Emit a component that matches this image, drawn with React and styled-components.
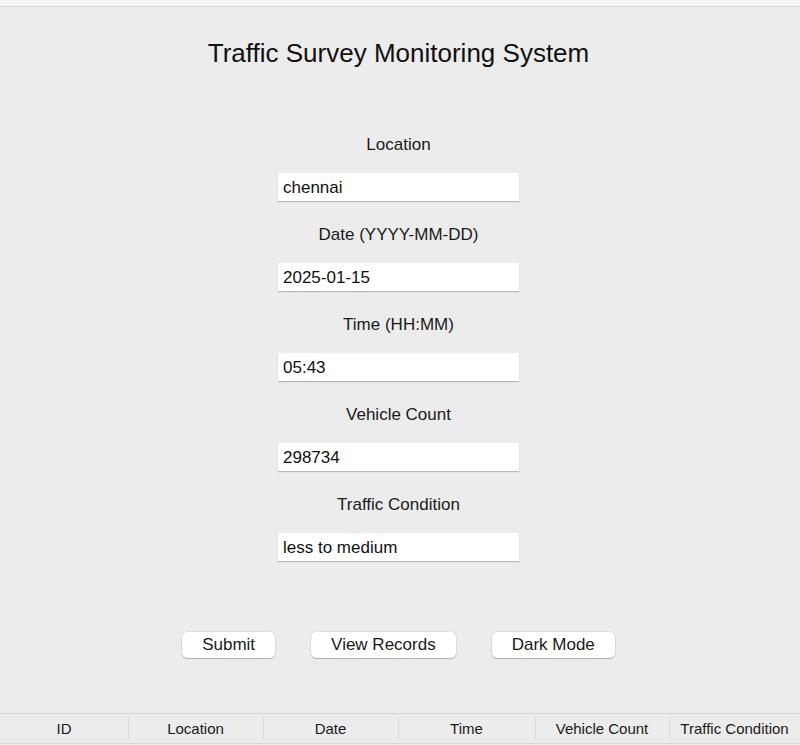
import React from 'react'
import styled, { createGlobalStyle } from 'styled-components'

const GlobalStyle = createGlobalStyle`
    html, body {
        margin: 0;
        padding: 0;
        background: #ececec;
    }
    body {
        font-family: "Liberation Sans", Arial, sans-serif;
        color: #1a1a1a;
    }
`

const fields = [
    { label: 'Location', value: 'chennai' },
    { label: 'Date (YYYY-MM-DD)', value: '2025-01-15' },
    { label: 'Time (HH:MM)', value: '05:43' },
    { label: 'Vehicle Count', value: '298734' },
    { label: 'Traffic Condition', value: 'less to medium' },
]

const columns = ['ID', 'Location', 'Date', 'Time', 'Vehicle Count', 'Traffic Condition']

function App() {
    return (
        <Window>
            <GlobalStyle />
            <TitleBar />
            <Title>Traffic Survey Monitoring System</Title>
            <Form>
                {fields.map((f) => (
                    <Field key={f.label}>
                        <Label>{f.label}</Label>
                        <Input defaultValue={f.value} />
                    </Field>
                ))}
            </Form>
            <Actions>
                <Button>Submit</Button>
                <Button>View Records</Button>
                <Button>Dark Mode</Button>
            </Actions>
            <TableHead>
                {columns.map((c, i) => (
                    <HeadCell key={c} $first={i === 0}>{c}</HeadCell>
                ))}
            </TableHead>
        </Window>
    )
}

export default App

const Window = styled.div`
    box-sizing: border-box;
    display: flex;
    flex-direction: column;
    align-items: center;
    width: 800px;
    height: 745px;
    padding-right: 3px;
    overflow: hidden;
`

const TitleBar = styled.div`
    align-self: stretch;
    margin-right: -3px;
    height: 6px;
    background: #f5f5f5;
    border-bottom: 1px solid #d8d8d8;
`

const Title = styled.h1`
    margin: 31px 0 0;
    font-weight: 400;
    font-size: 26px;
    line-height: 30px;
    color: #111;
`

const Form = styled.div`
    display: flex;
    flex-direction: column;
    margin-top: 66px;
    width: 241px;
`

const Field = styled.div`
    display: flex;
    flex-direction: column;
    align-items: center;
    height: 90px;
`

const Label = styled.div`
    padding-top: 1px;
    font-size: 17px;
    line-height: 20px;
    color: #1a1a1a;
`

const Input = styled.input`
    box-sizing: border-box;
    margin-top: 18px;
    width: 241px;
    height: 28px;
    padding: 1px 5px 0;
    border: none;
    background: #fff;
    box-shadow: 0 1px 1px rgba(0, 0, 0, 0.22);
    font-family: inherit;
    font-size: 17px;
    color: #111;
    outline: none;
`

const Actions = styled.div`
    display: flex;
    gap: 36px;
    margin-top: 48px;
`

const Button = styled.button`
    height: 26px;
    padding: 0 20px;
    border: none;
    border-radius: 5px;
    background: #fff;
    box-shadow: 0 0 0 0.5px rgba(0, 0, 0, 0.12), 0 1px 1px rgba(0, 0, 0, 0.2);
    font-family: inherit;
    font-size: 17px;
    color: #1a1a1a;
    cursor: pointer;
`

const TableHead = styled.div`
    display: grid;
    grid-template-columns: 128px 135px 135px 137px 134px 131px;
    align-self: stretch;
    margin-right: -3px;
    margin-top: 55px;
    height: 29px;
    border-top: 1px solid #d6d6d6;
    border-bottom: 1px solid #d6d6d6;
    background: #ececec;
`

const HeadCell = styled.div`
    position: relative;
    display: flex;
    align-items: center;
    justify-content: center;
    font-size: 15px;
    color: #1a1a1a;
    white-space: nowrap;

    &::before {
        content: '';
        display: ${(p) => (p.$first ? 'none' : 'block')};
        position: absolute;
        left: 0;
        top: 3px;
        bottom: 4px;
        width: 1px;
        background: #d8d8d8;
    }
`
